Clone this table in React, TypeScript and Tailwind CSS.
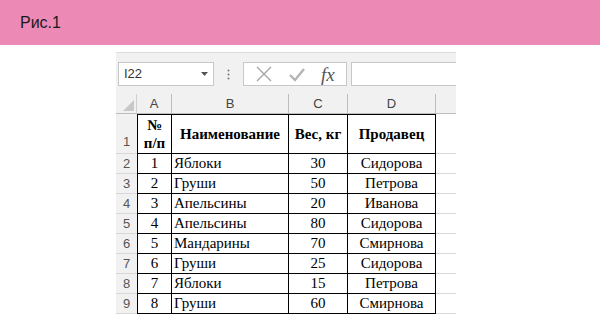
import React from 'react';

const rows = [
  { n: 1, name: 'Яблоки', w: 30, seller: 'Сидорова' },
  { n: 2, name: 'Груши', w: 50, seller: 'Петрова' },
  { n: 3, name: 'Апельсины', w: 20, seller: 'Иванова' },
  { n: 4, name: 'Апельсины', w: 80, seller: 'Сидорова' },
  { n: 5, name: 'Мандарины', w: 70, seller: 'Смирнова' },
  { n: 6, name: 'Груши', w: 25, seller: 'Сидорова' },
  { n: 7, name: 'Яблоки', w: 15, seller: 'Петрова' },
  { n: 8, name: 'Груши', w: 60, seller: 'Смирнова' },
];

const serif = { fontFamily: '"Liberation Serif", "Times New Roman", serif' };

const FormulaBar = () => (
  <div className="bg-[#f1f1f1] border-t border-[#dcdcdc] pt-[9px] pb-[8px] flex items-center">
    <div className="ml-[2px] w-[96px] h-[24px] bg-white border border-[#c8c8c8] flex items-center justify-between px-[5px]">
      <span className="text-[13px] text-[#333]">I22</span>
      <svg width="7" height="4" viewBox="0 0 7 4">
        <path d="M0 0 L7 0 L3.5 4 Z" fill="#555" />
      </svg>
    </div>
    <div className="w-[29px] flex justify-center">
      <svg width="3" height="11" viewBox="0 0 3 11">
        <circle cx="1.5" cy="1.5" r="1" fill="#777" />
        <circle cx="1.5" cy="5.5" r="1" fill="#777" />
        <circle cx="1.5" cy="9.5" r="1" fill="#777" />
      </svg>
    </div>
    <div className="w-[104px] h-[24px] bg-white border border-[#c8c8c8] flex items-center justify-around px-[4px]">
      <svg width="18" height="18" viewBox="0 0 18 18">
        <path d="M2 2 L16 16 M16 2 L2 16" stroke="#a6a6a6" strokeWidth="1.4" fill="none" />
      </svg>
      <svg width="18" height="16" viewBox="0 0 18 16">
        <path d="M2 9 L7 14 L16 3" stroke="#b4b4b4" strokeWidth="2.4" fill="none" />
      </svg>
      <span className="text-[19px] italic text-[#555] leading-none" style={serif}>
        fx
      </span>
    </div>
    <div className="ml-[4px] flex-1 h-[24px] bg-white border border-[#c8c8c8] border-r-0" />
  </div>
);

const ColHeader = () => (
  <div className="flex h-[20px] bg-[#f1f1f1] text-[13px] text-[#444] border-b border-[#bdbdbd]">
    <div className="w-[21px] relative border-r border-[#cfcfcf]">
      <svg className="absolute right-[2px] bottom-[2px]" width="11" height="11" viewBox="0 0 11 11">
        <path d="M11 0 L11 11 L0 11 Z" fill="#c8c8c8" />
      </svg>
    </div>
    <div className="w-[35px] flex items-center justify-center border-r border-[#bdbdbd]">A</div>
    <div className="w-[117px] flex items-center justify-center border-r border-[#bdbdbd]">B</div>
    <div className="w-[59px] flex items-center justify-center border-r border-[#bdbdbd]">C</div>
    <div className="w-[88px] flex items-center justify-center border-r border-[#bdbdbd]">D</div>
    <div className="flex-1" />
  </div>
);

const RowNum = ({ n, bottom }: { n: number; bottom?: boolean }) => (
  <div
    className={`w-[21px] bg-[#f1f1f1] text-[13px] text-[#555] border-b border-[#d8d8d8] flex justify-center ${
      bottom ? 'items-end pb-[2px]' : 'items-center'
    }`}
    style={{ fontFamily: '"Liberation Sans", Arial, sans-serif' }}
  >
    {n}
  </div>
);

export default function App() {
  return (
    <div className="w-[600px] h-[315px] bg-white overflow-hidden" style={{ fontFamily: '"Liberation Sans", Arial, sans-serif' }}>
      <div className="h-[45px] bg-[#ec89b5] flex items-center pl-[20px] text-[16px] text-[#1a1a1a]">Рис.1</div>
      <div className="ml-[116px] mt-[7px] w-[340px]">
        <FormulaBar />
        <ColHeader />
        <div className="text-[15px] text-black" style={serif}>
          <div className="flex h-[40px]">
            <RowNum n={1} bottom />
            <div className="w-[35px] border border-black flex flex-col items-center justify-center font-bold leading-[18px]">
              <span>№</span>
              <span>п/п</span>
            </div>
            <div className="w-[117px] border-y border-r border-black flex items-center justify-center font-bold">
              Наименование
            </div>
            <div className="w-[59px] border-y border-r border-black flex items-center justify-center font-bold">
              Вес, кг
            </div>
            <div className="w-[88px] border-y border-r border-black flex items-center justify-center font-bold">
              Продавец
            </div>
            <div className="flex-1 border-b border-[#dadada]" />
          </div>
          {rows.map((r, i) => (
            <div key={r.n} className="flex h-[20px]">
              <RowNum n={i + 2} />
              <div className="w-[35px] border-x border-b border-black flex items-center justify-center">{r.n}</div>
              <div className="w-[117px] border-r border-b border-black flex items-center pl-[2px]">{r.name}</div>
              <div className="w-[59px] border-r border-b border-black flex items-center justify-center">{r.w}</div>
              <div className="w-[88px] border-r border-b border-black flex items-center justify-center">{r.seller}</div>
              <div className="flex-1 border-b border-[#dadada]" />
            </div>
          ))}
        </div>
      </div>
    </div>
  );
}
